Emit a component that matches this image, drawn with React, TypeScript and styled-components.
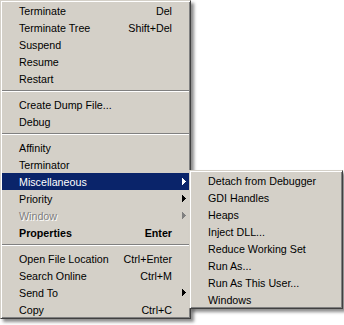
import styled, { createGlobalStyle } from 'styled-components';

const GlobalStyle = createGlobalStyle`
  html, body {
    margin: 0;
    padding: 0;
    background: #ffffff;
  }
  body {
    font-family: "Liberation Sans", Arial, sans-serif;
    font-size: 10.7px;
    color: #000000;
  }
`;

const Stage = styled.div`
  width: 344px;
  height: 325px;
  overflow: hidden;
  position: relative;
`;

const Menu = styled.div<{ $width: number }>`
  width: ${(p) => p.$width}px;
  box-sizing: border-box;
  background: #d4d0c8;
  border: 1px solid;
  border-color: #d4d0c8 #404040 #404040 #d4d0c8;
  padding: 1px 1px 0 1px;
  box-shadow:
    inset 1px 1px 0 #ffffff,
    inset -1px -1px 0 #808080,
    3px 3px 3px rgba(0, 0, 0, 0.45);
  display: flex;
  flex-direction: column;
`;

const SubMenu = styled(Menu)`
  position: absolute;
  left: 100%;
  top: -3px;
  z-index: 2;
`;

const Item = styled.div<{ $active?: boolean; $disabled?: boolean; $bold?: boolean }>`
  position: relative;
  height: 17px;
  line-height: 19px;
  display: grid;
  grid-template-columns: 1fr auto 17px;
  padding-left: 17px;
  white-space: nowrap;
  font-weight: ${(p) => (p.$bold ? 'bold' : 'normal')};
  background: ${(p) => (p.$active ? '#0a246a' : 'transparent')};
  color: ${(p) => (p.$active ? '#ffffff' : p.$disabled ? '#808080' : '#000000')};
  text-shadow: ${(p) => (p.$disabled ? '1px 1px 0 #ffffff' : 'none')};
`;

const Label = styled.span``;

const Shortcut = styled.span`
  text-align: right;
`;

const ArrowCell = styled.span`
  display: flex;
  align-items: center;
  justify-content: flex-end;
  padding-right: 3px;
  height: 17px;
`;

const Separator = styled.div`
  height: 9px;
  display: flex;
  flex-direction: column;
  justify-content: flex-start;
  padding-top: 3px;
  box-sizing: border-box;

  &::before {
    content: '';
    height: 1px;
    background: #808080;
  }
  &::after {
    content: '';
    height: 1px;
    background: #ffffff;
  }
`;

function Arrow({ disabled }: { disabled?: boolean }) {
  return (
    <svg width="4" height="7" viewBox="0 0 4 7" shapeRendering="crispEdges" style={{ display: 'block' }}>
      <path d="M0 0h1v7h-1z M1 1h1v5h-1z M2 2h1v3h-1z M3 3h1v1h-1z" fill={disabled ? '#808080' : 'currentColor'} />
    </svg>
  );
}

type Entry =
  | { sep: true }
  | { label: string; shortcut?: string; sub?: boolean; active?: boolean; disabled?: boolean; bold?: boolean };

const mainItems: Entry[] = [
  { label: 'Terminate', shortcut: 'Del' },
  { label: 'Terminate Tree', shortcut: 'Shift+Del' },
  { label: 'Suspend' },
  { label: 'Resume' },
  { label: 'Restart' },
  { sep: true },
  { label: 'Create Dump File...' },
  { label: 'Debug' },
  { sep: true },
  { label: 'Affinity' },
  { label: 'Terminator' },
  { label: 'Miscellaneous', sub: true, active: true },
  { label: 'Priority', sub: true },
  { label: 'Window', sub: true, disabled: true },
  { label: 'Properties', shortcut: 'Enter', bold: true },
  { sep: true },
  { label: 'Open File Location', shortcut: 'Ctrl+Enter' },
  { label: 'Search Online', shortcut: 'Ctrl+M' },
  { label: 'Send To', sub: true },
  { label: 'Copy', shortcut: 'Ctrl+C' },
];

const miscItems = [
  'Detach from Debugger',
  'GDI Handles',
  'Heaps',
  'Inject DLL...',
  'Reduce Working Set',
  'Run As...',
  'Run As This User...',
  'Windows',
];

export default function App() {
  return (
    <>
      <GlobalStyle />
      <Stage>
        <Menu $width={191}>
          {mainItems.map((e, i) =>
            'sep' in e ? (
              <Separator key={i} />
            ) : (
              <Item key={i} $active={e.active} $disabled={e.disabled} $bold={e.bold}>
                <Label>{e.label}</Label>
                <Shortcut>{e.shortcut ?? ''}</Shortcut>
                <ArrowCell>{e.sub && <Arrow disabled={e.disabled} />}</ArrowCell>
                {e.active && (
                  <SubMenu $width={154}>
                    {miscItems.map((m) => (
                      <Item key={m}>
                        <Label>{m}</Label>
                        <Shortcut />
                        <ArrowCell />
                      </Item>
                    ))}
                  </SubMenu>
                )}
              </Item>
            )
          )}
        </Menu>
      </Stage>
    </>
  );
}
